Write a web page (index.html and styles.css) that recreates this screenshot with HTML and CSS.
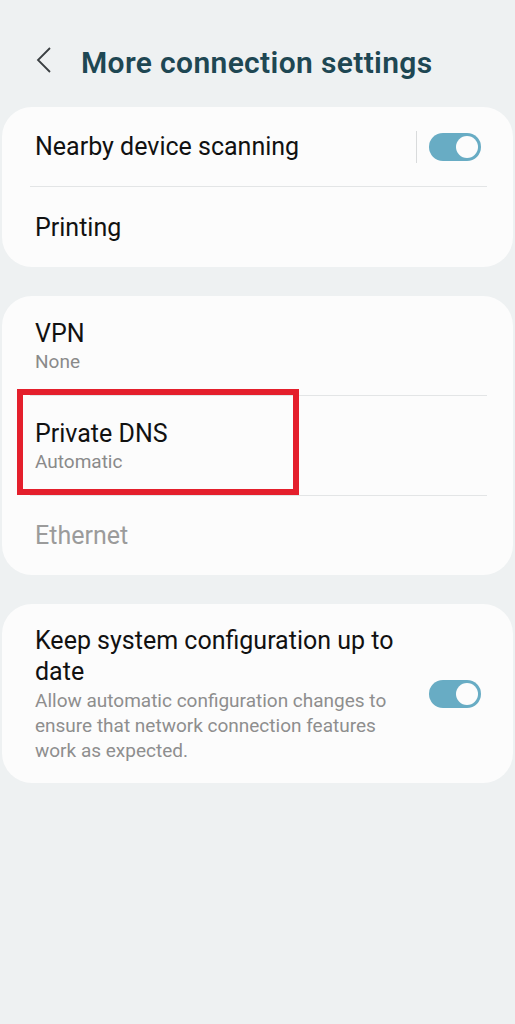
FILE: index.html
```html
<!DOCTYPE html>
<html>
    <head>
        <meta charset="utf-8">
        <title>More connection settings</title>
        <link rel="stylesheet" href="styles.css">
    </head>
    <body>
        <div class="header">
            <svg class="back" width="16" height="26" viewBox="0 0 16 26">
                <path d="M14 1 L2 13 L14 25" fill="none" stroke="#3a3f42" stroke-width="1.8"/>
            </svg>
            <h1 class="title">More connection settings</h1>
        </div>

        <div class="card">
            <div class="row row-short">
                <div class="text"><div class="label">Nearby device scanning</div></div>
                <span class="vline"></span>
                <span class="switch"><span class="knob"></span></span>
            </div>
            <div class="row row-short">
                <div class="text"><div class="label">Printing</div></div>
            </div>
        </div>

        <div class="card">
            <div class="row row-tall">
                <div class="text">
                    <div class="label">VPN</div>
                    <div class="sub">None</div>
                </div>
            </div>
            <div class="row row-tall">
                <div class="text">
                    <div class="label">Private DNS</div>
                    <div class="sub">Automatic</div>
                </div>
                <span class="mark"></span>
            </div>
            <div class="row row-last">
                <div class="text"><div class="label disabled">Ethernet</div></div>
            </div>
        </div>

        <div class="card">
            <div class="row row-big">
                <div class="text narrow">
                    <div class="label">Keep system configuration up to date</div>
                    <div class="desc">Allow automatic configuration changes to ensure that network connection features work as expected.</div>
                </div>
                <span class="switch"><span class="knob"></span></span>
            </div>
        </div>
    </body>
</html>
```

FILE: styles.css
```css
*{
    margin:0;
    padding:0;
    box-sizing:border-box;
}
body{
    background:#eef1f2;
    font-family:Roboto, "Noto Sans", sans-serif;
    color:#111;
    padding:0 2px;
    height:1024px;
}
.header{
    display:flex;
    align-items:center;
    height:107px;
    padding:18px 0 0 34px;
}
.back{
    display:block;
    margin-top:-6px;
}
.title{
    margin-left:29px;
    font-size:30px;
    font-weight:600;
    color:#1e4753;
    letter-spacing:0.35px;
}
.card{
    background:#fcfcfc;
    border-radius:30px;
    margin-bottom:29px;
}
.row{
    display:flex;
    align-items:center;
    border-bottom:1px solid #e3e5e6;
    margin:0 26px 0 28px;
    padding:0 6px 0 5px;
    position:relative;
}
.row:last-child{
    border-bottom:none;
}
.row-short{
    height:80px;
}
.row-tall{
    height:100px;
}
.row-last{
    height:79px;
}
.row-big{
    height:179px;
}
.text{
    flex:1;
}
.narrow{
    padding-right:28px;
}
.label{
    font-size:25px;
    line-height:31px;
}
.disabled{
    color:#9b9b9b;
}
.sub{
    font-size:19px;
    line-height:24px;
    color:#8a8a8a;
    margin-top:1px;
}
.desc{
    font-size:19px;
    line-height:25px;
    color:#8e8e8e;
    margin-top:1px;
}
.vline{
    width:1px;
    height:32px;
    background:#d9dbdc;
    margin-right:12px;
}
.switch{
    position:relative;
    width:52px;
    height:28px;
    border-radius:14px;
    background:#68acc4;
    flex:none;
}
.knob{
    position:absolute;
    right:3px;
    top:3px;
    width:22px;
    height:22px;
    border-radius:50%;
    background:#fcfcfc;
}
.mark{
    position:absolute;
    left:-13px;
    top:-7px;
    width:282px;
    height:106px;
    border:6px solid #e41f2c;
}
```
